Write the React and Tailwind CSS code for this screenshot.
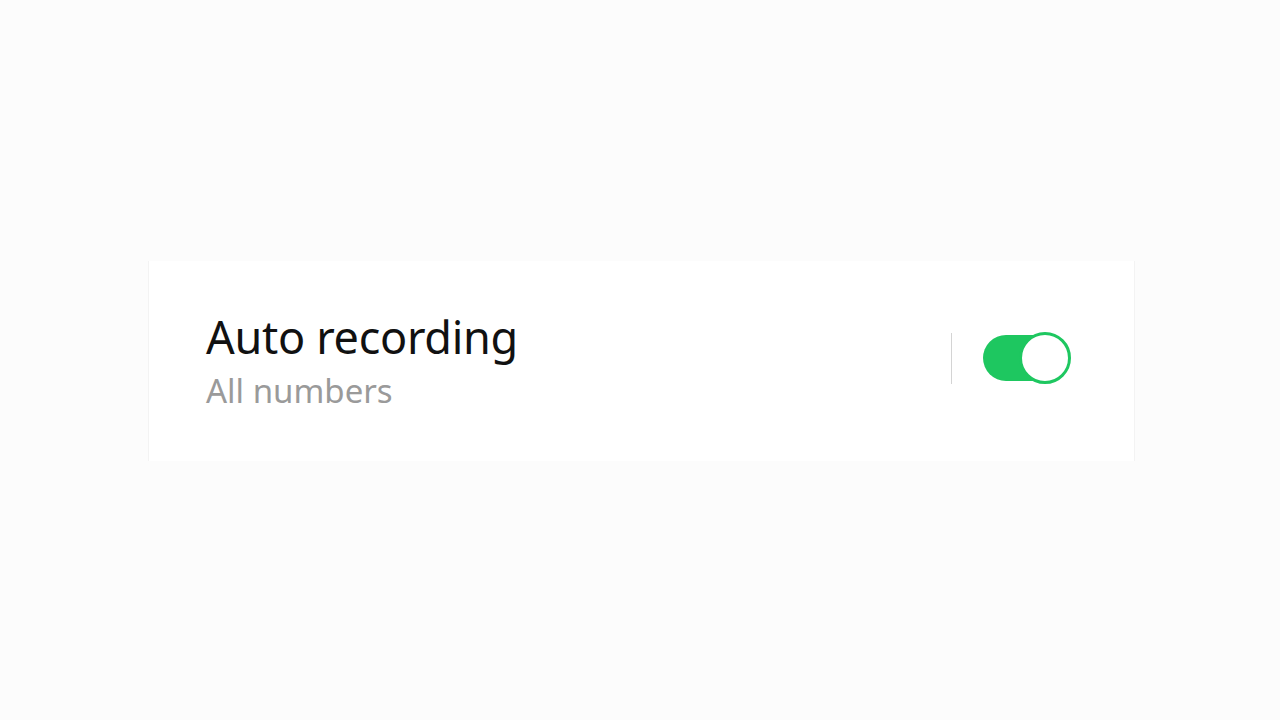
export default function App() {
  return (
    <div className="min-h-screen w-full bg-[#fcfcfc] pt-[261px] font-['Noto_Sans',sans-serif]">
      <div className="ml-[148px] w-[987px] h-[200px] bg-white border-l border-r border-[#f3f3f3] flex items-center pl-[57px] pr-[63px] pb-[6px]">
        <div className="flex-1 flex flex-col pt-[6px]">
          <div className="text-[45px] leading-[56px] text-[#111] tracking-[-0.3px]">Auto recording</div>
          <div className="text-[33px] leading-[44px] text-[#9a9a9a] mt-[4px]">All numbers</div>
        </div>
        <div className="w-px h-[51px] bg-[#d4d4d4] mr-[31px]" />
        <div className="relative w-[88px] h-[52px] flex items-center">
          <div className="w-[84px] h-[46px] rounded-full bg-[#1ec760]" />
          <div className="absolute right-0 top-0 w-[52px] h-[52px] rounded-full bg-white border-[3px] border-[#1ec760]" />
        </div>
      </div>
    </div>
  );
}
